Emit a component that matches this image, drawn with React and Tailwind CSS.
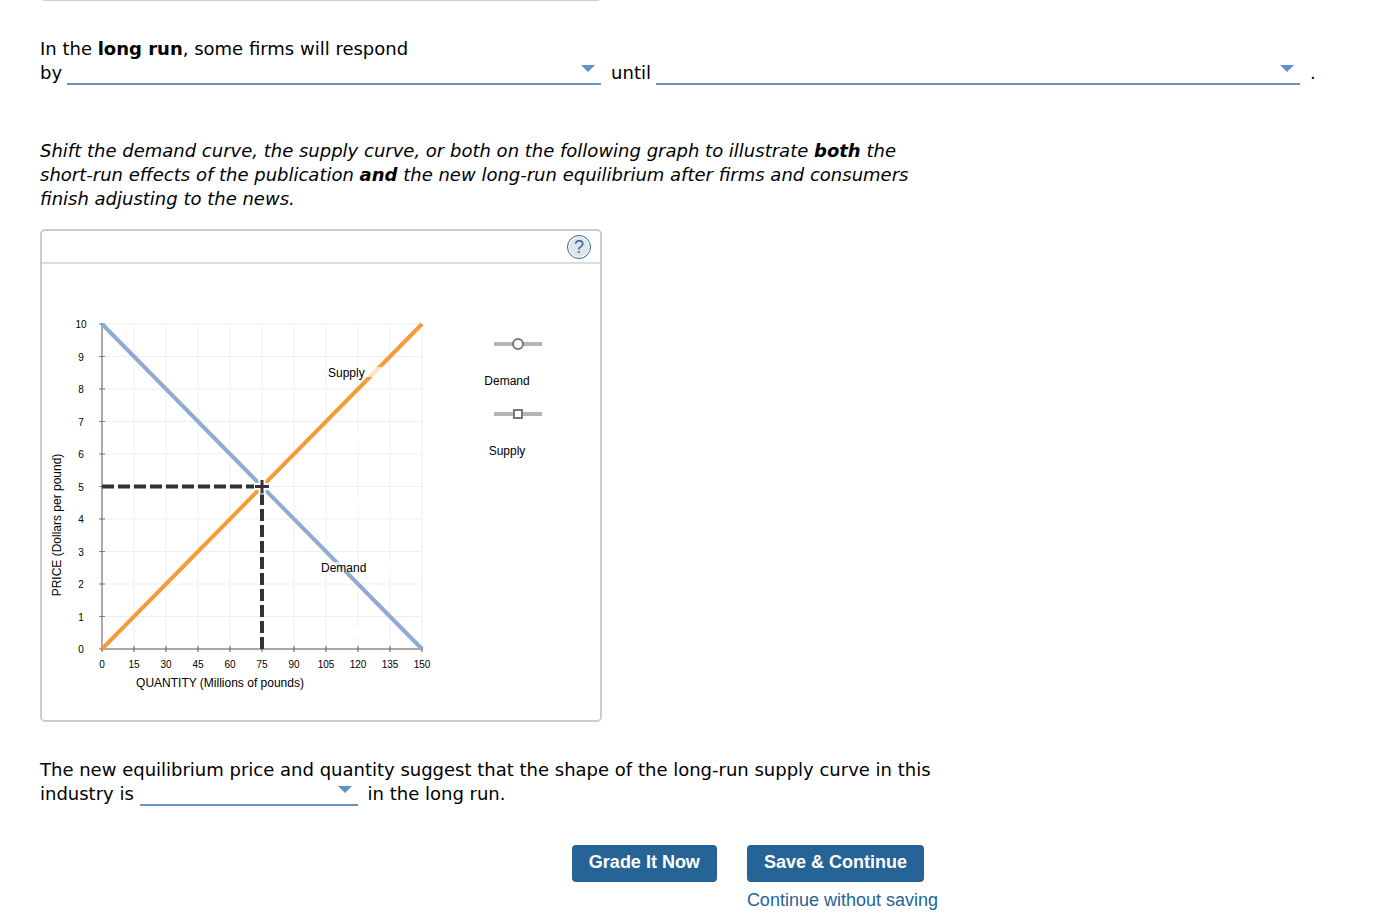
import React from "react";

const X0 = 102;
const Y0 = 649;
const xs = Array.from({ length: 11 }, (_, i) => ({ x: X0 + i * 32, label: i * 15 }));
const ys = Array.from({ length: 11 }, (_, i) => ({ y: Math.round(Y0 - i * 32.5), label: i }));

function Blank({ label, className }) {
  return (
    <span className={"relative inline-block h-6 align-top " + className}>
      <select
        aria-label={label}
        className="block h-6 w-full appearance-none border-b-2 border-[#6493c4] bg-transparent pr-6 outline-none"
      >
        <option></option>
      </select>
      <svg
        aria-hidden="true"
        viewBox="0 0 14 7"
        className="pointer-events-none absolute top-1 right-1.5 h-[7px] w-[14px] fill-[#5f92c6]"
      >
        <path d="M0 0H14L7 7Z" />
      </svg>
    </span>
  );
}

function Chart() {
  return (
    <svg
      viewBox="42 264 420 456"
      className="h-[456px] w-[420px] shrink-0 font-['Liberation_Sans',sans-serif]"
      role="img"
      aria-label="Supply and demand graph"
    >
      <g stroke="#f7f7f7" strokeWidth="2">
        {xs.slice(1).map(({ x }) => (
          <line key={x} x1={x} x2={x} y1="324" y2="649" />
        ))}
      </g>
      {ys.slice(1).map(({ y, label }) => (
        <line
          key={y}
          x1="102"
          x2="422"
          y1={label % 2 ? y - 0.5 : y}
          y2={label % 2 ? y - 0.5 : y}
          stroke={label % 2 ? "#eeeeee" : "#f7f7f7"}
          strokeWidth={label % 2 ? 1 : 2}
        />
      ))}
      <g fill="#ffffff" fillOpacity="0.8">
        <rect x="352" y="432" width="7" height="10" />
        <rect x="352" y="497" width="7" height="10" />
        <rect x="352" y="627" width="7" height="10" />
        <rect x="384" y="562" width="7" height="10" />
      </g>
      <g stroke="#aaaaaa" strokeWidth="2">
        <line x1="102" x2="102" y1="323" y2="650" />
        <line x1="101" x2="423" y1="649" y2="649" />
      </g>
      <g stroke="#666666" strokeOpacity="0.55">
        {xs.map(({ x }) => (
          <line key={x} x1={x} x2={x} y1="646" y2="652" strokeWidth="2" />
        ))}
        {ys.map(({ y, label }) => (
          <line
            key={y}
            x1="99"
            x2="105"
            y1={label % 2 ? y - 0.5 : y}
            y2={label % 2 ? y - 0.5 : y}
            strokeWidth={label % 2 ? 1 : 2}
            strokeOpacity={label % 2 ? 0.75 : 0.45}
          />
        ))}
      </g>
      <g fontSize="10" textAnchor="middle" fill="#000000">
        {xs.map(({ x, label }) => (
          <text key={x} x={x} y="668">{label}</text>
        ))}
        {ys.map(({ y, label }) => (
          <text key={y} x="81" y={y + 4}>{label}</text>
        ))}
      </g>
      <line x1="102" y1="324" x2="422" y2="649" stroke="#8cadd1" strokeWidth="4" />
      <line x1="102" y1="649" x2="422" y2="324" stroke="#f59c38" strokeWidth="4" />
      <g stroke="#333333" strokeWidth="4" strokeDasharray="12 4">
        <line x1="102" y1="486.5" x2="262" y2="486.5" />
        <line x1="262" y1="649" x2="262" y2="487" />
      </g>
      <path d="M262 478.500V494.500M254 486.500H270" stroke="#ffffff" strokeWidth="7" />
      <path d="M262 480V493.500M255 486.500H269" stroke="#333333" strokeWidth="3" />
      <rect x="328" y="367" width="56" height="10" fill="#ffffff" fillOpacity="0.7" />
      <rect x="321" y="562" width="56" height="10" fill="#ffffff" fillOpacity="0.7" />
      <g fontSize="12" fill="#000000">
        <text x="328" y="377">Supply</text>
        <text x="321" y="572">Demand</text>
        <text x="220" y="687" textAnchor="middle">QUANTITY (Millions of pounds)</text>
        <text transform="translate(61 525) rotate(-90)" textAnchor="middle">
          PRICE (Dollars per pound)
        </text>
      </g>
    </svg>
  );
}

function CurveTool({ name, children }) {
  return (
    <button type="button" className="flex w-12 flex-col items-center gap-[22px] text-xs leading-4">
      <svg aria-hidden="true" viewBox="0 0 48 14" className="h-3.5 w-12 overflow-visible">
        <rect x="11" y="5" width="48" height="4" fill="#b5b5b5" />
        {children}
      </svg>
      <span>{name}</span>
    </button>
  );
}

export default function App() {
  return (
    <main className="flex flex-col overflow-hidden bg-white px-10 pb-2 font-['DejaVu_Sans',sans-serif] text-[18px] leading-6 text-black">
      <div className="-mt-[31px] h-8 w-full max-w-[562px] rounded-[5px] border-2 border-[#cccccc]" />

      <div className="mt-9">
        <p>
          In the <strong>long run</strong>, some firms will respond
        </p>
        <div className="flex items-start">
          <span>by</span>
          <Blank label="Firm response" className="ml-[5px] w-[534px]" />
          <span className="ml-2.5">until</span>
          <Blank label="Response continues until" className="ml-[5px] w-[644px]" />
          <span className="ml-2.5">.</span>
        </div>
      </div>

      <p className="mt-[54px] max-w-[898px] italic">
        Shift the demand curve, the supply curve, or both on the following graph to illustrate{" "}
        <strong>both</strong> the short-run effects of the publication <strong>and</strong> the new
        long-run equilibrium after firms and consumers finish adjusting to the news.
      </p>

      <section className="mt-[18px] w-full max-w-[562px] rounded-[5px] border-2 border-[#cccccc] font-['Liberation_Sans',sans-serif]">
        <header className="flex h-[33px] items-center justify-end border-b-2 border-[#dddddd] pr-[9px]">
          <button
            type="button"
            aria-label="Help"
            className="flex size-6 items-center justify-center rounded-full border border-[#336699] bg-[#dfe5ec] text-[18px] leading-none text-[#336699] ring-1 ring-white ring-inset"
          >
            ?
          </button>
        </header>
        <div className="flex">
          <Chart />
          <div className="flex flex-col gap-[18px] pt-[73px] pl-[21px]">
            <CurveTool name="Demand">
              <circle cx="35" cy="7" r="5" fill="#ffffff" stroke="#777777" strokeWidth="2" />
            </CurveTool>
            <CurveTool name="Supply">
              <rect x="31" y="3" width="8" height="8" fill="#ffffff" stroke="#777777" strokeWidth="2" />
            </CurveTool>
          </div>
        </div>
      </section>

      <div className="mt-9 max-w-[898px]">
        <p>
          The new equilibrium price and quantity suggest that the shape of the long-run supply curve
          in this industry is <Blank label="Shape of the supply curve" className="mr-2.5 w-[218px]" />
          in the long run.
        </p>
      </div>

      <footer className="mt-[39px] flex max-w-[898px] items-start justify-end gap-[30px] font-['Liberation_Sans',sans-serif]">
        <button type="button" className="h-[37px] rounded-[4px] bg-[#266396] px-[17px] pb-1 font-bold text-white">
          Grade It Now
        </button>
        <div className="flex flex-col items-start gap-1.5">
          <button type="button" className="h-[37px] rounded-[4px] bg-[#266396] px-[17px] pb-1 font-bold text-white">
            Save &amp; Continue
          </button>
          <a href="#continue" className="text-[#266396]">
            Continue without saving
          </a>
        </div>
      </footer>
    </main>
  );
}
